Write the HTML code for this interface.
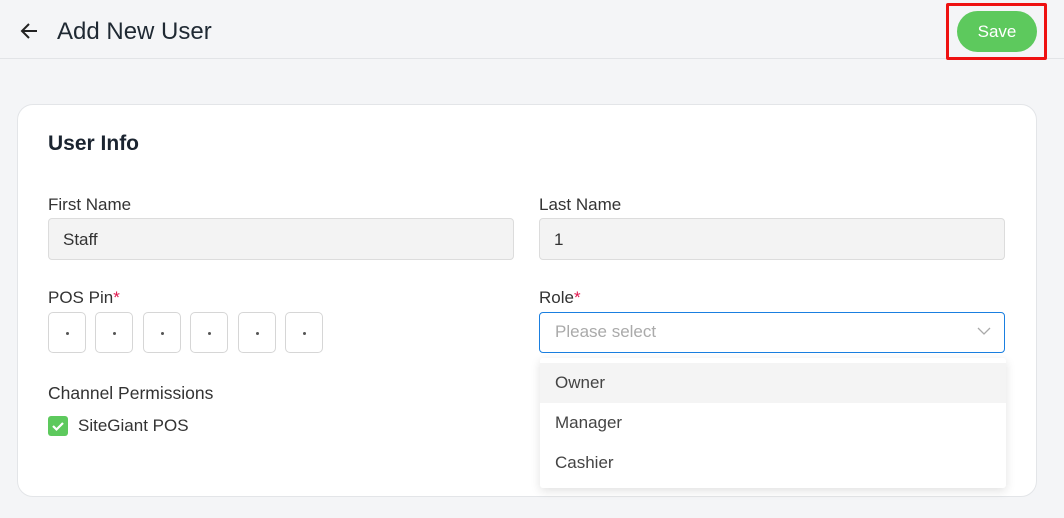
<!DOCTYPE html>
<html><head><style>
*{box-sizing:border-box;margin:0;padding:0}
body{width:1064px;height:518px;background:#f4f5f7;font-family:"Liberation Sans",Arial,sans-serif;position:relative;overflow:hidden;color:#333}
.hdr{position:absolute;left:0;top:0;width:1064px;height:59px;border-bottom:1px solid #e2e4e7}
.title{position:absolute;left:57px;top:18px;font-size:24px;color:#1f2933}
.back{position:absolute;left:19px;top:21px}
.redbox{position:absolute;left:946px;top:3px;width:101px;height:57px;border:3px solid #ee1111;border-radius:2px}
.save{position:absolute;left:957px;top:11px;width:80px;height:41px;border-radius:21px;background:#5dc95d;color:#fff;font-size:17px;text-align:center;line-height:41px}
.card{position:absolute;left:17px;top:104px;width:1020px;height:393px;background:#fff;border:1px solid #e3e5e8;border-radius:16px}
.abs{position:absolute}
.lbl{font-size:17px;color:#333}
.inp{position:absolute;height:42px;width:466px;background:#f3f3f3;border:1px solid #dcdcdc;border-radius:4px;font-size:17px;color:#333;padding:11px 14px}
.pin{position:absolute;top:312px;width:38px;height:41px;border:1px solid #d6d6d6;border-radius:5px;background:#fff}
.pin:after{content:"";position:absolute;left:17px;top:19px;width:3px;height:3px;border-radius:50%;background:#555}
.sel{position:absolute;left:539px;top:312px;width:466px;height:41px;border:1px solid #1a7fe0;border-radius:4px;background:#fff;font-size:17px;color:#aaa;padding:9px 15px}
.dd{position:absolute;left:540px;top:358px;width:466px;height:130px;background:#fff;border-radius:3px;box-shadow:0 3px 10px rgba(0,0,0,.12)}
.opt{position:absolute;left:0;width:466px;height:40px;font-size:17px;color:#444;padding:10px 15px}
</style></head><body>
<div class="hdr">
<svg class="back" width="20" height="20" viewBox="0 0 20 20"><path d="M18 10H3M10 3L3 10l7 7" fill="none" stroke="#222" stroke-width="2"/></svg>
<div class="title">Add New User</div>
</div>
<div class="redbox"></div>
<div class="save">Save</div>
<div class="card"></div>
<div class="abs" style="left:48px;top:132px;font-size:21px;font-weight:bold;color:#1b2430">User Info</div>
<div class="abs lbl" style="left:48px;top:195px">First Name</div>
<div class="abs lbl" style="left:539px;top:195px">Last Name</div>
<div class="inp" style="left:48px;top:218px">Staff</div>
<div class="inp" style="left:539px;top:218px">1</div>
<div class="abs lbl" style="left:48px;top:288px">POS Pin<span style="color:#e0154c">*</span></div>
<div class="abs lbl" style="left:539px;top:288px">Role<span style="color:#e0154c">*</span></div>
<div class="pin" style="left:48px"></div>
<div class="pin" style="left:95px"></div>
<div class="pin" style="left:143px"></div>
<div class="pin" style="left:190px"></div>
<div class="pin" style="left:238px"></div>
<div class="pin" style="left:285px"></div>
<div class="sel">Please select
<svg style="position:absolute;right:13px;top:14px" width="14" height="9" viewBox="0 0 14 9"><path d="M1 1l6 6 6-6" fill="none" stroke="#aaa" stroke-width="1.3"/></svg></div>
<div class="abs lbl" style="left:48px;top:383px;font-size:17.5px">Channel Permissions</div>
<div class="abs" style="left:48px;top:416px;width:20px;height:20px;background:#5dc95d;border-radius:3px">
<svg width="20" height="20" viewBox="0 0 20 20"><path d="M5 10l3.5 3.5L15 7" fill="none" stroke="#fff" stroke-width="2.2"/></svg></div>
<div class="abs" style="left:78px;top:416px;font-size:17px;color:#333">SiteGiant POS</div>
<div class="dd">
<div class="opt" style="top:5px;background:#f4f4f4">Owner</div>
<div class="opt" style="top:45px">Manager</div>
<div class="opt" style="top:85px">Cashier</div>
</div>
</body></html>
